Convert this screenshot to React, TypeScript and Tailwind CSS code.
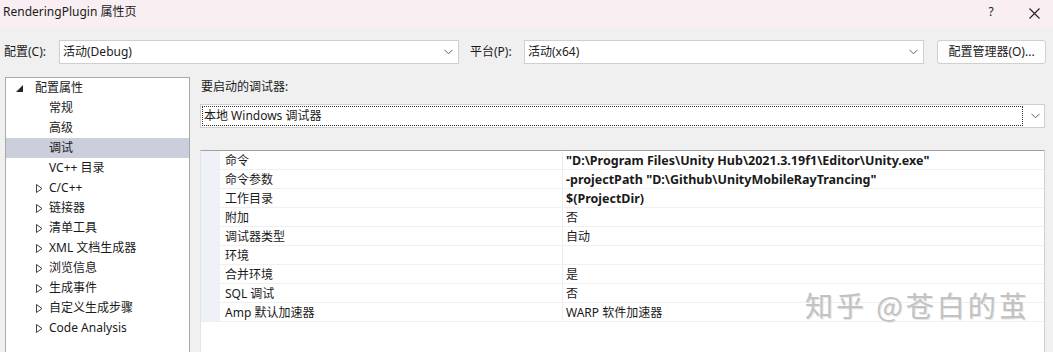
import React from "react";

const FONT = { fontFamily: '"Noto Sans", "Noto Sans CJK SC", sans-serif' };

function Chevron() {
  return (
    <svg width="9" height="6" viewBox="0 0 9 6" className="shrink-0">
      <path d="M0.5 0.8 L4.5 4.8 L8.5 0.8" fill="none" stroke="#606060" strokeWidth="1" />
    </svg>
  );
}

function Collapsed() {
  return (
    <svg width="7" height="9" viewBox="0 0 7 9" className="shrink-0">
      <path d="M0.5 0.5 L6 4.5 L0.5 8.5 Z" fill="none" stroke="#404040" strokeWidth="1" />
    </svg>
  );
}

function Expanded() {
  return (
    <svg width="7" height="7" viewBox="0 0 7 7" className="shrink-0">
      <path d="M7 0 L7 7 L0 7 Z" fill="#262626" />
    </svg>
  );
}

const tree: { label: string; level: number; kind: "exp" | "col" | "leaf"; sel?: boolean }[] = [
  { label: "配置属性", level: 0, kind: "exp" },
  { label: "常规", level: 1, kind: "leaf" },
  { label: "高级", level: 1, kind: "leaf" },
  { label: "调试", level: 1, kind: "leaf", sel: true },
  { label: "VC++ 目录", level: 1, kind: "leaf" },
  { label: "C/C++", level: 1, kind: "col" },
  { label: "链接器", level: 1, kind: "col" },
  { label: "清单工具", level: 1, kind: "col" },
  { label: "XML 文档生成器", level: 1, kind: "col" },
  { label: "浏览信息", level: 1, kind: "col" },
  { label: "生成事件", level: 1, kind: "col" },
  { label: "自定义生成步骤", level: 1, kind: "col" },
  { label: "Code Analysis", level: 1, kind: "col" },
];

const props: { name: string; value: string; bold?: boolean }[] = [
  { name: "命令", value: '"D:\\Program Files\\Unity Hub\\2021.3.19f1\\Editor\\Unity.exe"', bold: true },
  { name: "命令参数", value: '-projectPath "D:\\Github\\UnityMobileRayTrancing"', bold: true },
  { name: "工作目录", value: "$(ProjectDir)", bold: true },
  { name: "附加", value: "否" },
  { name: "调试器类型", value: "自动" },
  { name: "环境", value: "" },
  { name: "合并环境", value: "是" },
  { name: "SQL 调试", value: "否" },
  { name: "Amp 默认加速器", value: "WARP 软件加速器" },
];

export default function App() {
  return (
    <div
      className="relative w-[1053px] h-[352px] overflow-hidden bg-[#f0f0f0] text-[12px] text-[#1a1a1a] flex flex-col"
      style={FONT}
    >
      {/* Title bar */}
      <div className="h-[27px] shrink-0 bg-[#f9eef2] flex items-start pt-[3px] pl-[3px]">
        <span className="leading-[18px] text-[12px]">RenderingPlugin 属性页</span>
        <div className="ml-auto flex items-start">
          <span className="w-[20px] text-center leading-[18px] text-[12px] mr-[28px]">?</span>
          <svg width="11" height="11" viewBox="0 0 11 11" className="mt-[5px] mr-[13px]">
            <path d="M0.5 0.5 L10.5 10.5 M10.5 0.5 L0.5 10.5" stroke="#222" strokeWidth="1.1" />
          </svg>
        </div>
      </div>

      {/* Config row */}
      <div className="h-[50px] shrink-0 flex items-start pt-[13px]">
        <span className="ml-[4px] w-[55px] leading-[24px]">配置(C):</span>
        <div className="w-[400px] h-[24px] bg-white border border-[#cfcfcf] flex items-center pl-[3px] pr-[5px]">
          <span className="flex-1">活动(Debug)</span>
          <Chevron />
        </div>
        <span className="ml-[11px] w-[54px] leading-[24px]">平台(P):</span>
        <div className="w-[400px] h-[24px] bg-white border border-[#cfcfcf] flex items-center pl-[3px] pr-[5px]">
          <span className="flex-1">活动(x64)</span>
          <Chevron />
        </div>
        <div className="ml-[13px] w-[109px] h-[24px] bg-[#fdfdfd] border border-[#d0d0d0] rounded-[3px] flex items-center justify-center">
          配置管理器(O)...
        </div>
      </div>

      {/* Main */}
      <div className="flex-1 flex items-start">
        {/* Tree */}
        <div className="ml-[5px] w-[185px] h-[290px] bg-white border border-[#a9a9a9]">
          {tree.map((t) => (
            <div
              key={t.label}
              className={`h-[20px] flex items-center ${t.sel ? "bg-[#cbcedb]" : ""}`}
            >
              {t.kind === "exp" && (
                <div className="ml-[10px] w-[14px] flex items-center">
                  <Expanded />
                </div>
              )}
              {t.kind === "col" && (
                <div className="ml-[30px] w-[13px] flex items-center">
                  <Collapsed />
                </div>
              )}
              {t.kind === "leaf" && <div className="ml-[43px]" />}
              <span className={t.level === 0 ? "ml-[5px]" : "ml-[0px]"}>{t.label}</span>
            </div>
          ))}
        </div>

        {/* Right pane */}
        <div className="ml-[10px] w-[845px] flex flex-col">
          <div className="h-[20px] flex items-center pl-[1px]">要启动的调试器:</div>
          <div className="mt-[7px] h-[24px] bg-white border border-[#cfcfcf] flex items-center pr-[4px]">
            <div className="ml-[1px] flex-1 h-[20px] border border-dotted border-[#303030] flex items-center pl-[1px]">
              本地 Windows 调试器
            </div>
            <div className="w-[17px] flex justify-end">
              <Chevron />
            </div>
          </div>

          {/* Property grid */}
          <div className="mt-[22px] h-[210px] bg-white border-t border-[#a0a0a0] border-r border-r-[#cfcfcf] border-l border-l-[#e4e4e4]">
            {props.map((p) => (
              <div key={p.name} className="h-[19px] flex border-b border-[#f0f0f0]">
                <div className="w-[19px] bg-[#eef1f8]" />
                <div className="w-[343px] pl-[5px] pt-[2px] flex items-center border-r border-[#ececec]">{p.name}</div>
                <div className={`flex-1 pl-[3px] pt-[2px] flex items-center ${p.bold ? "font-bold text-[12.5px]" : ""}`}>{p.value}</div>
              </div>
            ))}
          </div>
        </div>
      </div>

      {/* Watermark */}
      <div
        className="absolute left-[805px] top-[287px] text-[28px] leading-[36px] text-[#c2c2c2] tracking-[3px] whitespace-nowrap"
        style={{ fontFamily: '"Noto Sans CJK SC", sans-serif', textShadow: "1px 1px 0 #e6e6e6" }}
      >
        知乎 @苍白的茧
      </div>
    </div>
  );
}
